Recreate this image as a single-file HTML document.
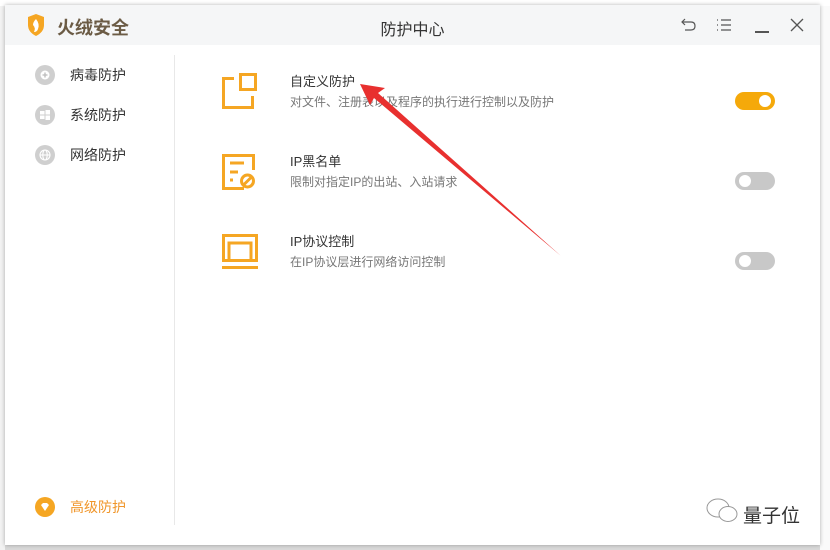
<!DOCTYPE html>
<html><head><meta charset="utf-8"><style>
*{margin:0;padding:0;box-sizing:border-box}
body{width:830px;height:550px;overflow:hidden;background:#d9d9d9;font-family:"Liberation Sans","Noto Sans CJK SC",sans-serif;position:relative}
.bgtop{position:absolute;left:0;top:0;width:830px;height:6px;background:#fff}
.bgl{position:absolute;left:0;top:6px;width:5px;height:544px;background:#f2f2f2}
.bgr{position:absolute;left:820px;top:6px;width:10px;height:544px;background:#fafafa}
.win{position:absolute;left:5px;top:5px;width:815px;height:540px;background:#fff;box-shadow:0 0 4px rgba(0,0,0,.3)}
.title{position:absolute;left:0;top:0;width:815px;height:40px;background:#f5f6f7}
.logo{position:absolute;left:52px;top:9px;font-size:18px;font-weight:bold;color:#6b5b45;letter-spacing:0}
.ttext{position:absolute;left:0;width:815px;top:11px;text-align:center;font-size:16px;color:#333}
.side{position:absolute;left:0;top:40px;width:170px;height:500px}
.div{position:absolute;left:169px;top:50px;width:1px;height:470px;background:#e8e8e8}
.nav{position:absolute;left:30px;font-size:14px;color:#333}
.nav i{position:absolute;left:0;top:0;width:20px;height:20px;border-radius:50%;background:#cfcfcf}
.nav span{position:absolute;left:35px;top:0;white-space:nowrap;line-height:20px}
.item{position:absolute;left:285px}
.item .h{font-size:13px;color:#333;white-space:nowrap}
.item .d{font-size:12px;color:#777;margin-top:3px;white-space:nowrap}
.tg{position:absolute;left:730px;width:40px;height:18px;border-radius:9px;background:#c8c8c8}
.tg b{position:absolute;top:3px;width:12px;height:12px;border-radius:50%;background:#fff}
</style></head><body>
<div class="bgtop"></div><div class="bgl"></div><div class="bgr"></div>
<div class="win">
<div class="title">
<svg style="position:absolute;left:22px;top:9px" width="18" height="22" viewBox="0 0 18 22"><path d="M1 3 L9 0 L17 3 L17 11 Q17 18 9 22 Q1 18 1 11Z" fill="#f5a623"/><path d="M9 5 Q13 10 11 15 Q10 18 7 18 Q9 14 6 11 Q6 8 9 5Z" fill="#fff"/></svg>
<div class="logo">火绒安全</div>
<div class="ttext">防护中心</div>
<svg style="position:absolute;left:676px;top:12px" width="16" height="16" viewBox="0 0 16 16" fill="none" stroke="#555" stroke-width="1.2"><path d="M4 2 L1 5 L4 8"/><path d="M1 5 H10 Q14 5 14 9 Q14 13 10 13 H4"/></svg>
<svg style="position:absolute;left:711px;top:12px" width="16" height="16" viewBox="0 0 16 16" stroke="#555" stroke-width="1.2"><path d="M1 3h1M1 8h1M1 13h1M5 3h10M5 8h10M5 13h10"/></svg>
<div style="position:absolute;left:750px;top:26px;width:14px;height:1.5px;background:#555"></div>
<svg style="position:absolute;left:785px;top:13px" width="14" height="14" viewBox="0 0 14 14" stroke="#555" stroke-width="1.3"><path d="M1 1L13 13M13 1L1 13"/></svg>
</div>
<div class="div"></div>
<div class="nav" style="top:60px"><i></i><svg style="position:absolute;left:5px;top:5px" width="10" height="10"><circle cx="5" cy="5" r="4.5" fill="#fff"/><path d="M5 2.5v5M2.5 5h5" stroke="#bbb" stroke-width="1.3"/></svg><span>病毒防护</span></div>
<div class="nav" style="top:100px"><i></i><svg style="position:absolute;left:5px;top:5px" width="10" height="10"><rect x="0" y="1" width="4.5" height="3.5" fill="#fff"/><rect x="5.5" y="0" width="4.5" height="4.5" fill="#fff"/><rect x="0" y="5.5" width="4.5" height="3.5" fill="#fff"/><rect x="5.5" y="5.5" width="4.5" height="4.5" fill="#fff"/></svg><span>系统防护</span></div>
<div class="nav" style="top:140px"><i></i><svg style="position:absolute;left:4px;top:4px" width="12" height="12" fill="none" stroke="#fff" stroke-width="1.1"><circle cx="6" cy="6" r="5"/><ellipse cx="6" cy="6" rx="2.2" ry="5"/><path d="M1 6h10"/></svg><span>网络防护</span></div>
<div class="nav" style="top:492px;color:#f0962a"><i style="background:#f5a623"></i><svg style="position:absolute;left:5px;top:5px" width="10" height="10"><path d="M1 3L3 1H7L9 3L5 9Z" fill="#fff"/></svg><span>高级防护</span></div>

<svg style="position:absolute;left:215px;top:67px" width="40" height="40" viewBox="0 0 40 40" fill="none" stroke="#f5a623" stroke-width="3"><path d="M14 6.5 H3.5 V35.5 H32.5 V24"/><rect x="20.5" y="2.5" width="15" height="15"/></svg>
<svg style="position:absolute;left:215px;top:147px" width="40" height="40" viewBox="0 0 40 40" fill="none" stroke="#f5a623" stroke-width="3"><path d="M24 36.5 H3.5 V3.5 H33.5 V18"/><path d="M10 11h14M10 20h8M10 28h3"/><circle cx="27.5" cy="29" r="6"/><path d="M23.5 33L31.5 25"/></svg>
<svg style="position:absolute;left:215px;top:227px" width="40" height="40" viewBox="0 0 40 40" fill="none" stroke="#f5a623" stroke-width="3"><rect x="3.5" y="3.5" width="33" height="25"/><path d="M9 28.5V11h22v17.5"/><path d="M2 35.5h36"/></svg>

<div class="item" style="top:66px"><div class="h">自定义防护</div><div class="d">对文件、注册表以及程序的执行进行控制以及防护</div></div>
<div class="item" style="top:146px"><div class="h">IP黑名单</div><div class="d">限制对指定IP的出站、入站请求</div></div>
<div class="item" style="top:226px"><div class="h">IP协议控制</div><div class="d">在IP协议层进行网络访问控制</div></div>
<div class="tg" style="top:87px;background:#f5a90a"><b style="right:4px"></b></div>
<div class="tg" style="top:167px"><b style="left:4px"></b></div>
<div class="tg" style="top:247px"><b style="left:4px"></b></div>

<svg style="position:absolute;left:700px;top:492px" width="36" height="28" viewBox="0 0 36 28" fill="none" stroke="#999" stroke-width="1"><ellipse cx="13" cy="11" rx="11" ry="9"/><ellipse cx="23" cy="17" rx="9" ry="7.5" fill="#fff"/></svg>
<div style="position:absolute;left:738px;top:496px;font-size:19px;color:#333">量子位</div>
</div>
<svg style="position:absolute;left:0;top:0" width="830" height="550"><path d="M360 84 L385 88 L378 93 L561 256 L374 98 L370 105 Z" fill="#e8302f"/></svg>
</body></html>
